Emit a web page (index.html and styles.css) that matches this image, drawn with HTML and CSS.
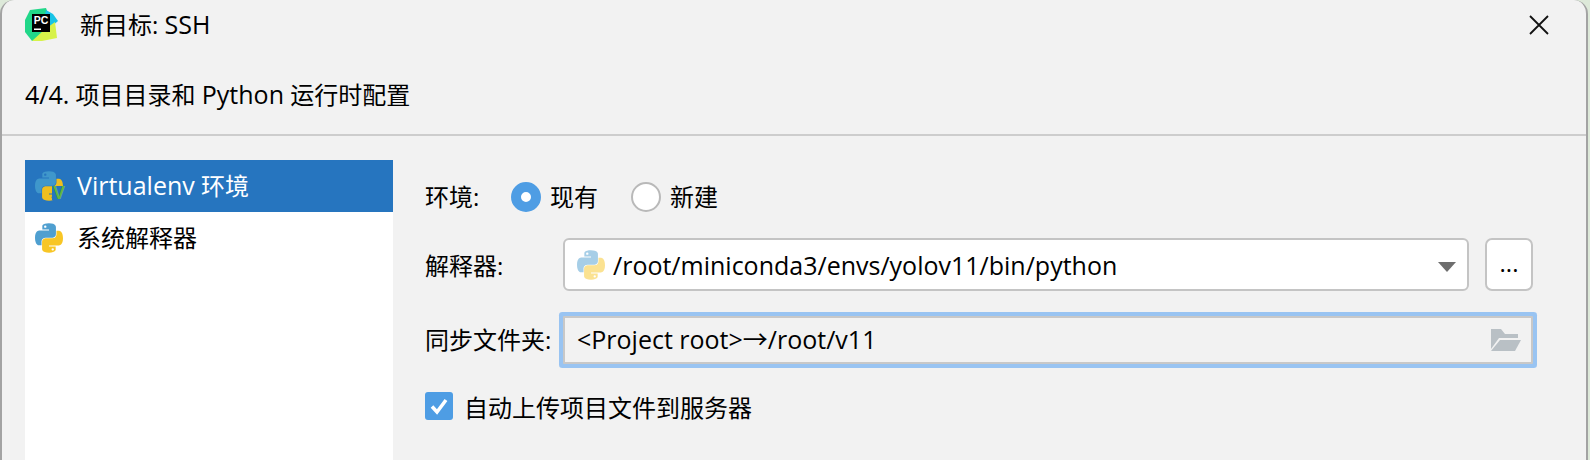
FILE: index.html
```html
<!DOCTYPE html>
<html lang="zh-CN">
<head>
    <meta charset="UTF-8">
    <title>新目标: SSH</title>
    <link rel="stylesheet" href="styles.css">
</head>
<body>
    <svg class="defs" width="0" height="0">
        <symbol id="py-blue" viewBox="0 0 24 24">
            <path d="M11.900 1C6.700 1 7 3.300 7 3.300v2.400h5v.7H5C5 6.400 1.500 6 1.500 11.800S4.500 17.500 4.500 17.500h1.900v-2.700s-.1-3 3-3h5s2.800 0 2.800-2.800V3.900S17.600 1 11.900 1zM9.200 2.600a.9.900 0 1 1 0 1.800.9.900 0 0 1 0-1.800z"/>
        </symbol>
    </svg>

    <div class="window">
        <div class="titlebar">
            <svg class="logo" viewBox="0 0 34 34">
                <polygon points="6,2 22,0 25,8 21,30 8,33 1,24 1,12" fill="#21d789"/>
                <polygon points="22,2 29,6 34,13 27,19 20,12" fill="#19c3e6"/>
                <polygon points="31,14 33,30 18,33 8,33 20,22" fill="#d7f24a"/>
                <rect x="8" y="6" width="18" height="18" fill="#000"/>
                <text x="9.800" y="15.800" class="logo-text">PC</text>
                <rect x="10" y="20.500" width="7" height="1.500" fill="#fff"/>
            </svg>
            <span class="title">新目标: <span class="latin">SSH</span></span>
            <svg class="close" viewBox="0 0 20 20">
                <path d="M1 1l18 18M19 1L1 19"/>
            </svg>
        </div>

        <div class="subtitle"><span class="latin">4/4.</span> 项目目录和 <span class="latin">Python</span> 运行时配置</div>

        <div class="content">
            <ul class="sidebar">
                <li class="sidebar-item selected">
                    <span class="py-icon">
                        <svg class="py-top"><use href="#py-blue"/></svg>
                        <svg class="py-bottom"><use href="#py-blue"/></svg>
                        <span class="venv-mark">V</span>
                    </span>
                    <span class="raised"><span class="latin">Virtualenv</span> 环境</span>
                </li>
                <li class="sidebar-item">
                    <span class="py-icon">
                        <svg class="py-top"><use href="#py-blue"/></svg>
                        <svg class="py-bottom"><use href="#py-blue"/></svg>
                    </span>
                    <span class="raised">系统解释器</span>
                </li>
            </ul>

            <div class="form">
                <div class="env-row">
                    <span class="env-label raised">环境:</span>
                    <span class="radio checked"></span>
                    <span class="radio-text raised">现有</span>
                    <span class="radio"></span>
                    <span class="radio-text raised">新建</span>
                </div>

                <div class="field-row interpreter-row">
                    <span class="field-label">解释器:</span>
                    <div class="combo">
                        <span class="py-icon faded">
                            <svg class="py-top"><use href="#py-blue"/></svg>
                            <svg class="py-bottom"><use href="#py-blue"/></svg>
                        </span>
                        <span class="combo-text latin">/root/miniconda3/envs/yolov11/bin/python</span>
                        <span class="arrow"></span>
                    </div>
                    <div class="more-btn">...</div>
                </div>

                <div class="field-row sync-row">
                    <span class="field-label raised">同步文件夹:</span>
                    <div class="path-field">
                        <span class="path-text latin raised">&lt;Project root&gt;→/root/v11</span>
                        <svg class="folder" viewBox="0 0 30 22">
                            <path d="M0 0h10l4 5h13v4H8L0 20z"/>
                            <path d="M9 11h21l-6 11H0z"/>
                        </svg>
                    </div>
                </div>

                <div class="upload-row">
                    <span class="checkbox">
                        <svg viewBox="0 0 28 28"><path d="M7 14.500l5 5.500 9-12"/></svg>
                    </span>
                    <span class="upload-text">自动上传项目文件到服务器</span>
                </div>
            </div>
        </div>
    </div>
</body>
</html>
```

FILE: styles.css
```css
html, body {
    margin: 0;
    height: 460px;
    overflow: hidden;
}

body {
    background-color: #dde9d9;
    font-family: "Open Sans", "Noto Sans CJK SC", sans-serif;
    font-size: 24px;
    color: #000;
}

.latin {
    font-size: 25px;
}

.raised {
    margin-bottom: 4px;
}

.defs {
    display: block;
    height: 0;
}

.window {
    box-sizing: border-box;
    width: 1588px;
    height: 460px;
    background-color: #f2f2f2;
    border-left: 2px solid #a3a3a3;
    border-right: 2px solid #a3a3a3;
    border-top-left-radius: 14px;
    border-top-right-radius: 14px;
}

.titlebar {
    display: flex;
    align-items: center;
    height: 50px;
    padding-left: 22px;
    padding-right: 37px;
}

.logo {
    width: 34px;
    height: 34px;
    margin-right: 22px;
}

.logo-text {
    font-family: "Liberation Sans", sans-serif;
    font-size: 10.500px;
    font-weight: bold;
    fill: #fff;
}

.title {
    flex: 1;
    margin-bottom: 4px;
}

.close {
    width: 20px;
    height: 20px;
    fill: none;
    stroke: #111;
    stroke-width: 1.800;
}

.subtitle {
    box-sizing: border-box;
    height: 86px;
    padding: 27px 0 0 23px;
    line-height: 34px;
    border-bottom: 2px solid #cdcdcd;
}

.content {
    display: flex;
    padding: 24px 0 0 23px;
}

.sidebar {
    width: 368px;
    height: 300px;
    margin: 0;
    padding: 0;
    list-style: none;
    background-color: #fff;
}

.sidebar-item {
    display: flex;
    align-items: center;
    height: 52px;
    padding-left: 8px;
}

.sidebar-item.selected {
    background-color: #2675bf;
    color: #fff;
}

.py-icon {
    position: relative;
    flex: none;
    width: 32px;
    height: 32px;
    margin-right: 12px;
}

.py-top, .py-bottom {
    position: absolute;
    left: 0;
    top: 0;
    width: 32px;
    height: 32px;
}

.py-top {
    fill: #4f9fd0;
}

.py-bottom {
    fill: #f8c625;
    transform: rotate(180deg);
}

.selected .py-top {
    fill: #3f97cb;
}

.selected .py-bottom {
    fill: #eebf1f;
}

.faded {
    opacity: 0.5;
}

.venv-mark {
    position: absolute;
    left: 19px;
    bottom: 2px;
    padding-left: 1px;
    background-color: #2675bf;
    font-family: "Liberation Sans", sans-serif;
    font-size: 18px;
    font-weight: bold;
    line-height: 14px;
    color: #62b543;
}

.form {
    flex: 1;
    padding: 22px 0 0 32px;
}

.env-row {
    display: flex;
    align-items: center;
    height: 30px;
}

.env-label {
    width: 86px;
}

.radio {
    box-sizing: border-box;
    width: 30px;
    height: 30px;
    border: 2px solid #b9b9b9;
    border-radius: 50%;
    background-color: #fff;
}

.radio.checked {
    border: 10px solid #4e9de4;
}

.radio-text {
    width: 81px;
    margin-left: 9px;
}

.field-row {
    display: flex;
    align-items: center;
}

.field-label {
    flex: none;
    width: 138px;
}

.interpreter-row {
    margin-top: 26px;
}

.combo {
    box-sizing: border-box;
    display: flex;
    align-items: center;
    width: 906px;
    height: 53px;
    padding: 0 11px 0 10px;
    background-color: #fff;
    border: 2px solid #c4c4c4;
    border-radius: 6px;
}

.combo .py-icon {
    margin-right: 6px;
}

.combo-text {
    flex: 1;
}

.arrow {
    width: 0;
    height: 0;
    margin-top: 5px;
    border-left: 9px solid transparent;
    border-right: 9px solid transparent;
    border-top: 10px solid #6e6e6e;
}

.more-btn {
    box-sizing: border-box;
    width: 48px;
    height: 53px;
    margin-left: 16px;
    background-color: #fff;
    border: 2px solid #c4c4c4;
    border-radius: 7px;
    text-align: center;
    line-height: 46px;
}

.sync-row {
    margin-top: 25px;
}

.path-field {
    box-sizing: border-box;
    display: flex;
    align-items: center;
    width: 970px;
    height: 48px;
    padding: 0 10px 0 12px;
    background-color: #f2f2f2;
    border: 2px solid #c8c8c8;
    box-shadow: 0 0 0 4px #99c4f2;
    border-radius: 1px;
}

.path-text {
    flex: 1;
}

.folder {
    width: 30px;
    height: 22px;
    fill: #b9c0c5;
}

.upload-row {
    display: flex;
    align-items: center;
    height: 28px;
    margin-top: 28px;
}

.checkbox {
    box-sizing: border-box;
    width: 28px;
    height: 28px;
    background-color: #4e9de4;
    border-radius: 3px;
}

.checkbox svg {
    display: block;
    width: 28px;
    height: 28px;
    fill: none;
    stroke: #fff;
    stroke-width: 3.500;
}

.upload-text {
    margin-left: 11px;
}
```
